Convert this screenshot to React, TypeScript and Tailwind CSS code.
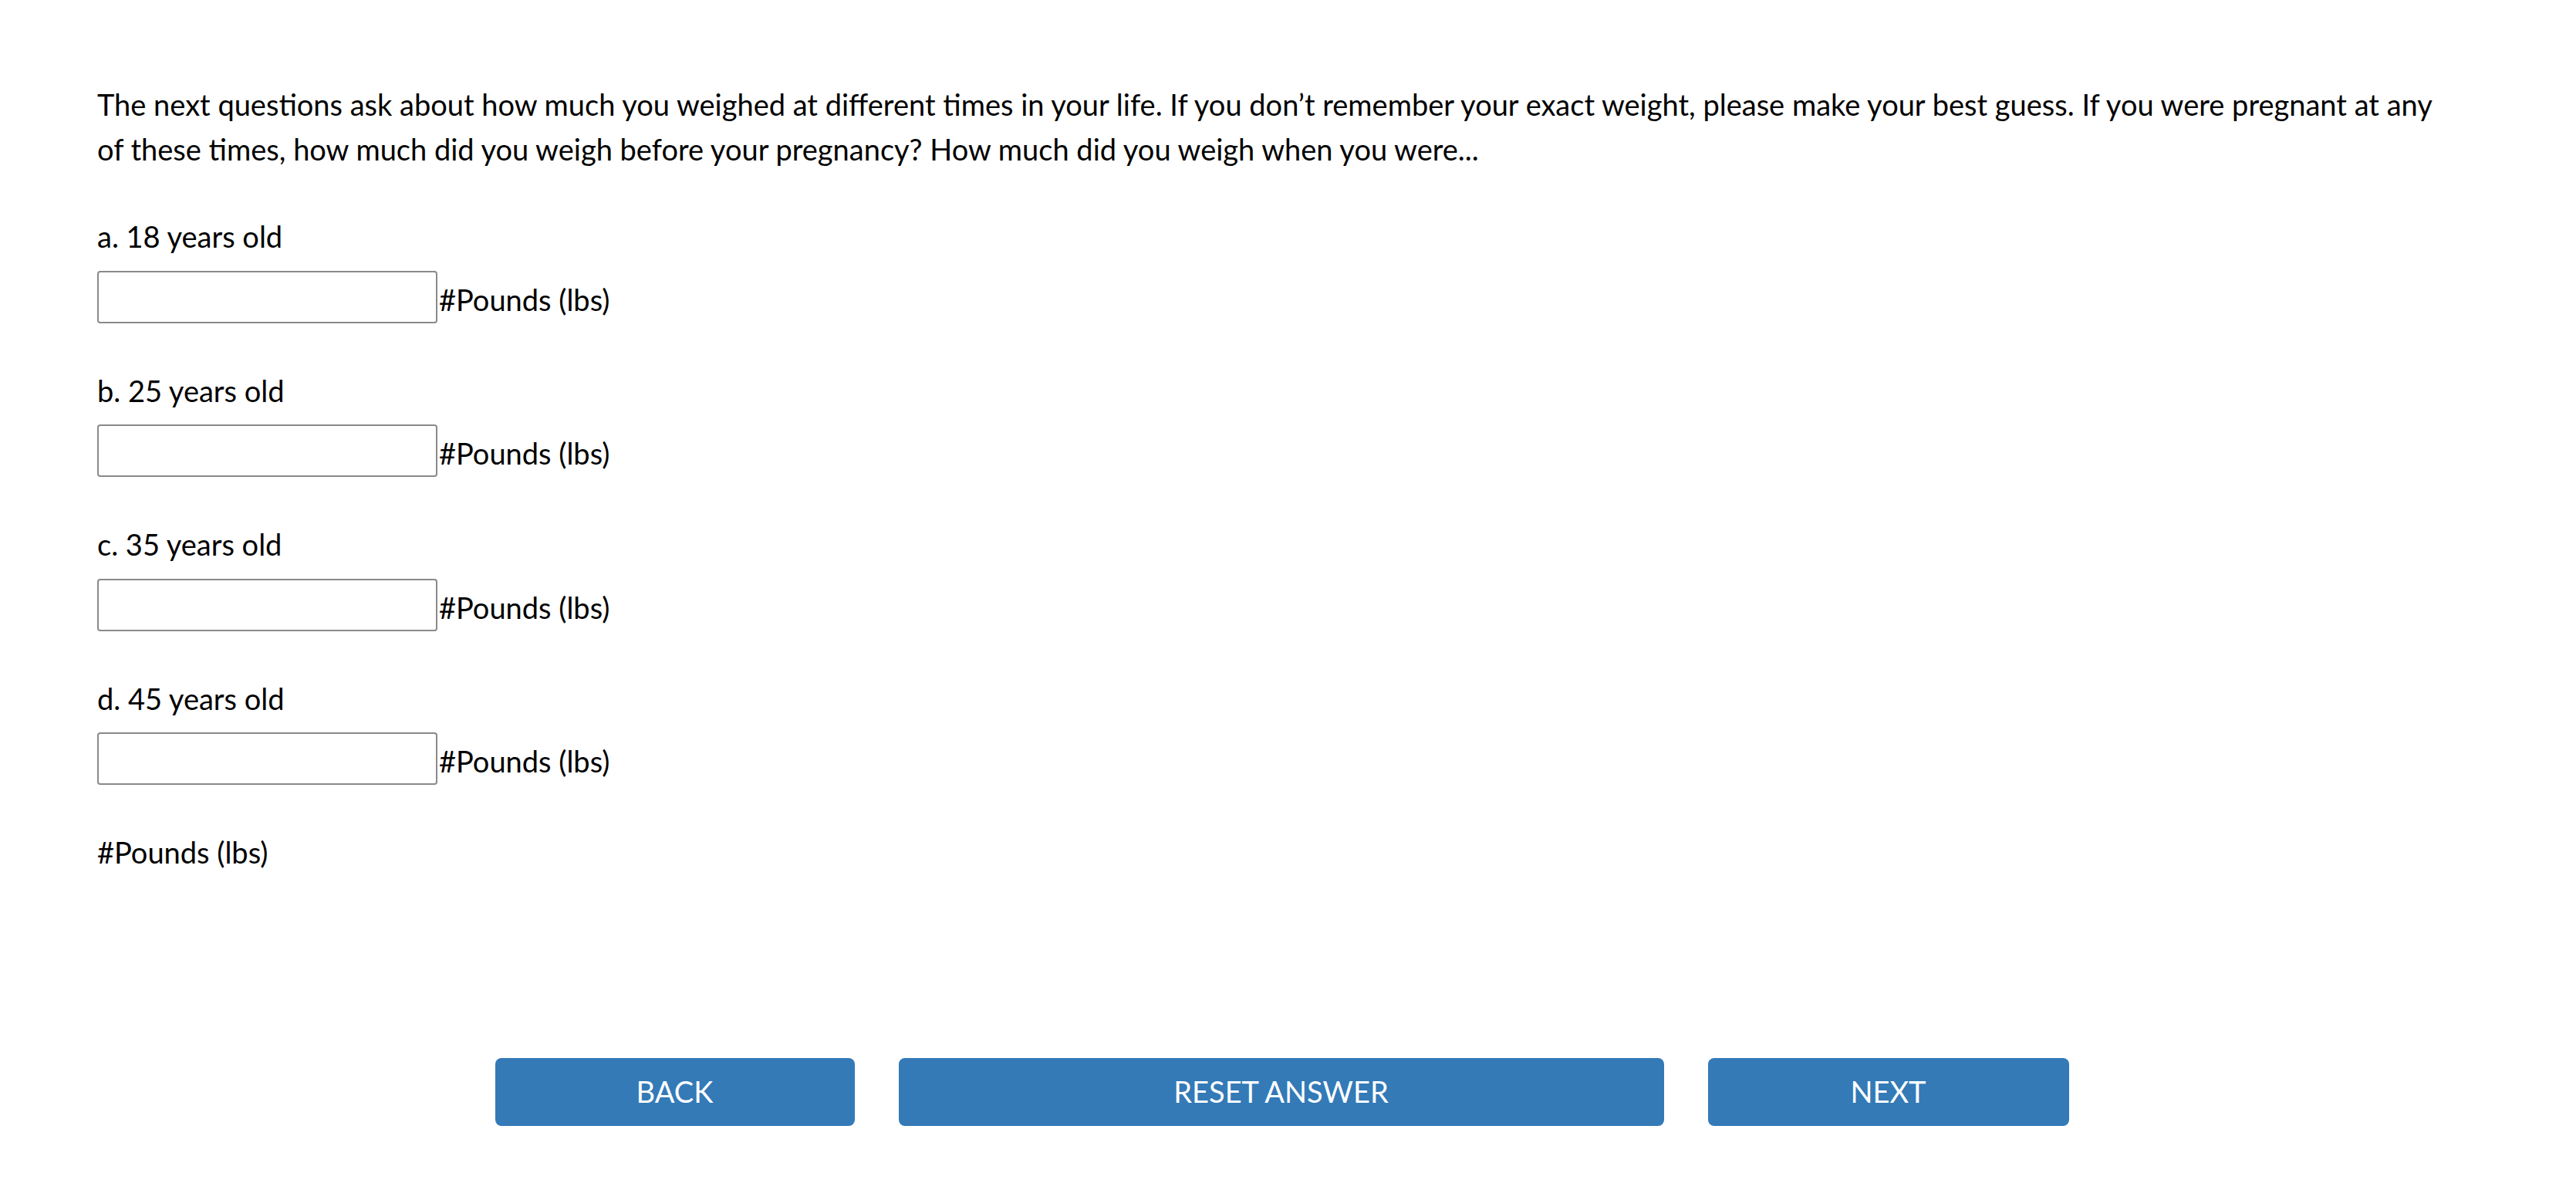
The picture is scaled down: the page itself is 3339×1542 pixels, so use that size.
const ages = [
  { key: 'a', label: 'a. 18 years old' },
  { key: 'b', label: 'b. 25 years old' },
  { key: 'c', label: 'c. 35 years old' },
  { key: 'd', label: 'd. 45 years old' },
]

export default function App() {
  return (
    <div
      className="min-h-screen bg-white text-black text-[38px] leading-[57.5px]"
      style={{ fontFamily: 'Lato, "Open Sans", sans-serif' }}
    >
      <div className="pl-[126px] pr-[150px] pt-[107px]">
        <p>
          The next questions ask about how much you weighed at different times in your life. If you don’t remember your exact weight, please make your best guess. If you were pregnant at any of these times, how much did you weigh before your pregnancy? How much did you weigh when you were...
        </p>

        <div className="mt-[56px] flex flex-col gap-[59px]">
          {ages.map(a => (
            <div key={a.key} className="flex flex-col gap-[15px]">
              <label>{a.label}</label>
              <div className="flex items-center">
                <input
                  type="text"
                  className="w-[441px] h-[68px] border-2 border-[#8a8a8a] rounded-[4px] bg-white px-3 outline-none"
                />
                <span className="pt-[8px] pl-[2px]">#Pounds (lbs)</span>
              </div>
            </div>
          ))}
          <div>#Pounds (lbs)</div>
        </div>
      </div>

      <div className="mt-[237px] flex justify-center gap-[57px] pr-[16px]">
        <button className="w-[466px] h-[88px] rounded-[8px] bg-[#337ab7] text-white uppercase">Back</button>
        <button className="w-[992px] h-[88px] rounded-[8px] bg-[#337ab7] text-white uppercase">Reset Answer</button>
        <button className="w-[468px] h-[88px] rounded-[8px] bg-[#337ab7] text-white uppercase">Next</button>
      </div>
    </div>
  )
}
